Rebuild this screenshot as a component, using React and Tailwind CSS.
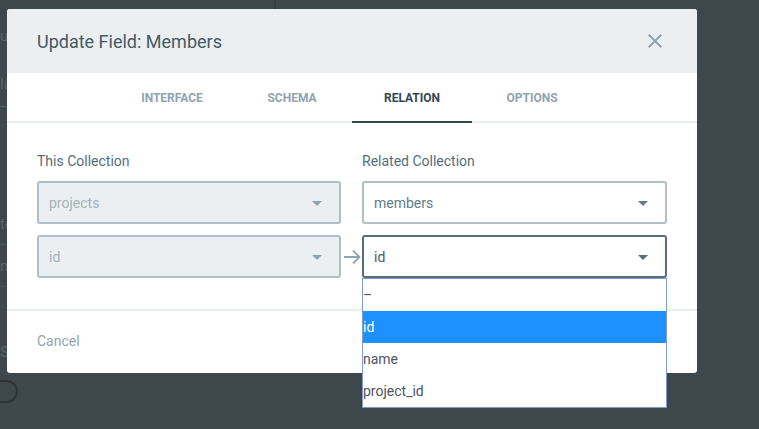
import { useState } from 'react'

const tabs = ['Interface', 'Schema', 'Relation', 'Options']
const options = ['–', 'id', 'name', 'project_id']

function Caret({ className }) {
  return (
    <svg width="10" height="5" viewBox="0 0 10 5" className={className}>
      <path d="M0 0h10L5 5z" fill="currentColor" />
    </svg>
  )
}

function SelectBox({ value, disabled, focused, children }) {
  let tone = 'bg-white border-[#b0bec5] text-[#607d8b]'
  if (disabled) tone = 'bg-[#eceff1] border-[#b0bec5] text-[#a4b3ba]'
  if (focused) tone = 'bg-white border-[#546e7a] text-[#455a64]'

  return (
    <div className="relative">
      <div className={`h-[43px] flex items-center justify-between pl-[10px] pr-[17px] pt-[1px] border-2 rounded-[3px] text-[14px] ${tone}`}>
        <span>{value}</span>
        <Caret className={disabled ? 'text-[#90a4ae]' : focused ? 'text-[#546e7a]' : 'text-[#607d8b]'} />
      </div>
      {children}
    </div>
  )
}

// faint page behind the overlay, only the left edge peeks out
function BackgroundPage() {
  return (
    <div className="flex h-full">
      <div className="w-[276px] flex flex-col text-[15px] text-[#5a666c]">
        <div className="h-[300px] border-r-2 border-[#333c41] flex flex-col">
          <div className="h-[25px]" />
          <div className="h-[22px]">ut</div>
          <div className="h-[26px]" />
          <div className="h-[22px]">la</div>
          <div className="h-[12px] border-b border-[#56626a]" />
          <div className="h-[106px]" />
          <div className="h-[22px]">te</div>
          <div className="h-[10px] border-b border-[#4f5a60]" />
          <div className="h-[10px]" />
          <div className="h-[22px]">n</div>
          <div className="h-[10px] border-b border-[#4f5a60]" />
        </div>
        <div className="h-[41px]" />
        <div className="h-[22px]">S</div>
        <div className="h-[17px]" />
        <div className="h-[23px] w-[42px] -ml-[24px] rounded-full border-2 border-[#2c3438]" />
      </div>
    </div>
  )
}

export default function App() {
  const [activeTab] = useState('Relation')

  return (
    <div
      className="relative w-[759px] h-[429px] overflow-hidden bg-[#3d474c]"
      style={{ fontFamily: 'Roboto, "Noto Sans", sans-serif' }}
    >
      <BackgroundPage />

      <div className="absolute inset-0 pl-[7px] pt-[9px]">
        <div className="w-[690px] h-[364px] bg-white rounded-[3px] flex flex-col">
          <div className="h-[64px] bg-[#eceff1] rounded-t-[3px] flex items-center justify-between pl-[30px] pr-[30px] shrink-0">
            <h1 className="text-[18px] text-[#455a64]">Update Field: Members</h1>
            <svg width="24" height="24" viewBox="0 0 24 24">
              <path
                d="M19 6.41L17.59 5 12 10.59 6.41 5 5 6.41 10.59 12 5 17.59 6.41 19 12 13.41 17.59 19 19 17.59 13.41 12z"
                fill="#90a4ae"
              />
            </svg>
          </div>

          <div className="h-[50px] border-b-2 border-[#eceff1] flex justify-center shrink-0">
            {tabs.map(t => (
              <div
                key={t}
                className={`w-[120px] -mb-[2px] pt-[1px] flex items-center justify-center text-[12px] font-bold uppercase border-b-2 ${
                  t === activeTab ? 'border-[#37474f] text-[#37474f]' : 'border-transparent text-[#90a4ae]'
                }`}
              >
                {t}
              </div>
            ))}
          </div>

          <div className="px-[30px] pt-[28px] pb-[31px] border-b-2 border-[#eceff1] shrink-0">
            <div className="grid grid-cols-[304px_21px_1fr] gap-y-[11px]">
              <div className="text-[14px] leading-[20px] text-[#546e7a] -mb-[1px]">This Collection</div>
              <div />
              <div className="text-[14px] leading-[20px] text-[#546e7a] -mb-[1px]">Related Collection</div>

              <SelectBox value="projects" disabled />
              <div />
              <SelectBox value="members" />

              <SelectBox value="id" disabled />
              <div className="flex items-center justify-center pl-[1px] pt-[1px]">
                <svg width="17" height="14" viewBox="0 0 17 14" fill="none" stroke="#90a4ae" strokeWidth="1.8">
                  <path d="M0 7h15.5M9 0.6L15.5 7 9 13.4" />
                </svg>
              </div>
              <SelectBox value="id" focused>
                <ul className="absolute left-0 right-0 top-full z-10 bg-white border border-[#7f9ccf] text-[14px]">
                  {options.map(o => (
                    <li
                      key={o}
                      className={`h-[32px] flex items-center pt-[1px] ${
                        o === 'id' ? 'bg-[#1e90ff] text-white' : 'text-[#4f5563]'
                      }`}
                    >
                      {o}
                    </li>
                  ))}
                </ul>
              </SelectBox>
            </div>
          </div>

          <div className="flex-1 flex items-center justify-between px-[30px] pb-[1px]">
            <button className="text-[14px] text-[#90a4ae]">Cancel</button>
            <button className="h-[40px] px-[20px] rounded-[3px] bg-[#263238] text-white text-[14px]">Save</button>
          </div>
        </div>
      </div>
    </div>
  )
}
